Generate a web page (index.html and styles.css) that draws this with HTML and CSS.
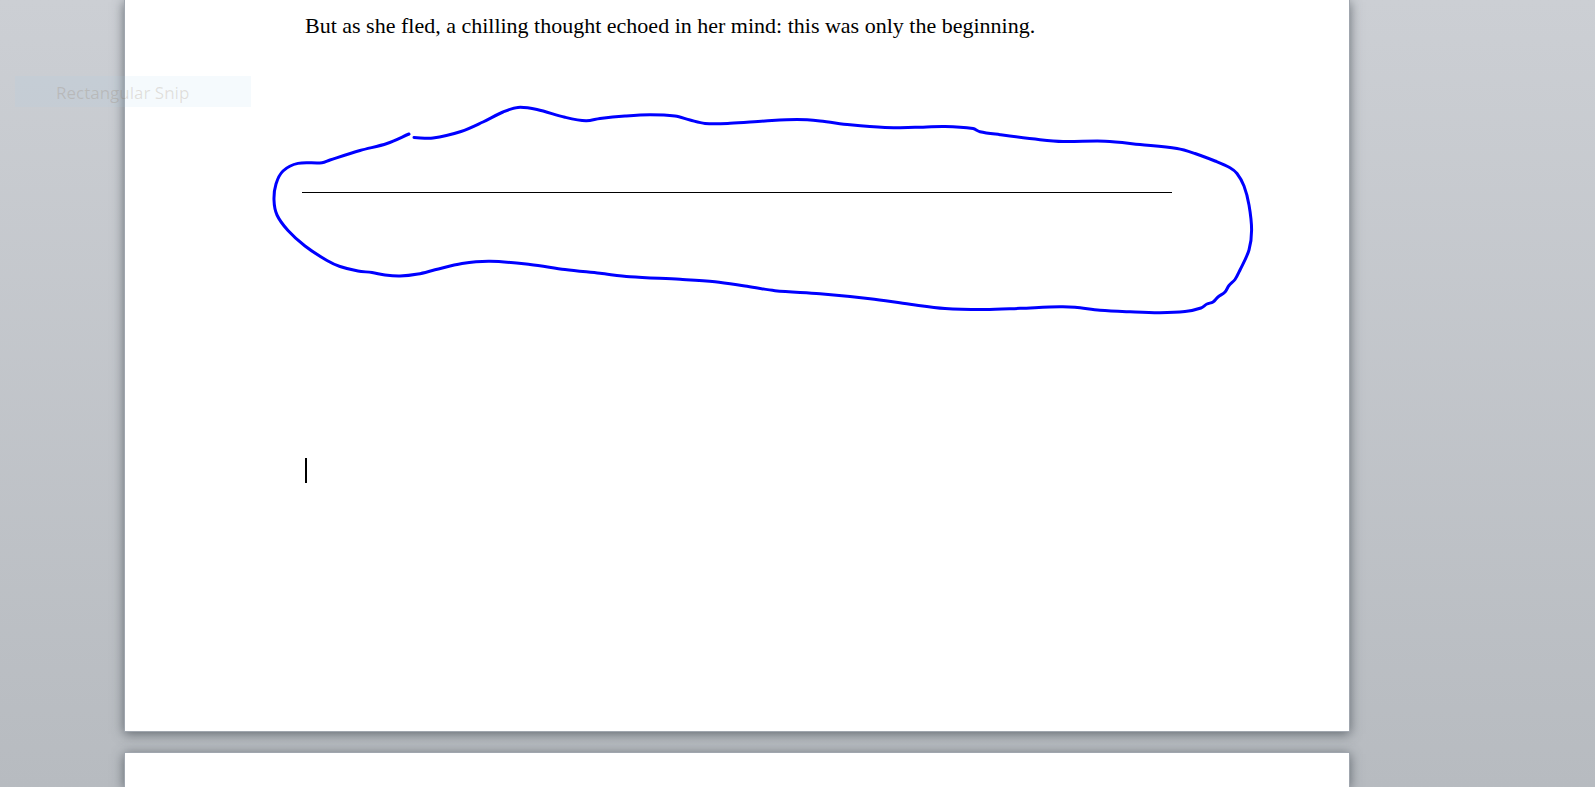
FILE: index.html
```
<!DOCTYPE html>
<html lang="en">
<head>
  <meta charset="UTF-8">
  <title>Document</title>
  <link rel="stylesheet" href="styles.css">
</head>
<body>

<main class="workspace">

  <section class="sheet sheet-first">
    <p class="line">But as she fled, a chilling thought echoed in her mind: this was only the beginning.</p>
    <hr class="rule">
    <div class="caret"></div>

    <!-- pen stroke around the horizontal line -->
    <svg class="ink" width="1000" height="220" viewBox="260 100 1000 220" aria-hidden="true">
      <path id="stroke"/>
    </svg>
  </section>

  <section class="sheet sheet-next"></section>

</main>

<div class="snip-label">Rectangular Snip</div>

  <script>
    const points = [
      [414, 137.5], [433, 138], [461, 131.5], [483, 122], [503, 112], [518, 107.4], [537, 109.5],
      [565, 117.3], [586, 120.8], [600, 118.5], [625, 116], [650, 114.7], [675, 116], [690, 120],
      [705, 123.4], [730, 123.3], [765, 121], [797, 119.6], [820, 121], [850, 124.8], [885, 127.5],
      [915, 127.3], [945, 126.5], [973, 128.6], [980, 131.7], [1000, 134.7], [1040, 139.7],
      [1063, 141.5], [1105, 141.2], [1140, 144.5], [1177, 148.5], [1195, 153.5], [1215, 161],
      [1230, 167.7], [1237, 173.5], [1244, 186], [1249, 205], [1251.6, 230], [1249, 250],
      [1240, 270], [1235, 279.5], [1229, 285.5], [1225, 292], [1218, 297], [1213, 302],
      [1207, 304], [1201, 308], [1185, 311.5], [1160, 312.7], [1130, 311.8], [1100, 310.2],
      [1075, 307.2], [1060, 306.7], [1020, 308.3], [985, 309.5], [945, 308.5], [910, 304.3],
      [870, 298.7], [820, 293.7], [775, 290.7], [745, 286], [715, 281.7], [680, 279.3],
      [630, 276.8], [600, 273.3], [565, 269.5], [530, 264.5], [490, 261.2], [462, 263.5],
      [435, 269.8], [418, 274], [400, 276], [385, 275], [372, 272.5], [358, 271], [340, 266.5],
      [327, 260.5], [305, 246], [288, 230.5], [277, 215], [274, 200], [276, 184], [283, 171],
      [298, 163.4], [322, 162.8], [330, 160], [360, 150.5], [387, 143.5], [409, 134]
    ];
    const dist = (a, b) => Math.hypot(b[0] - a[0], b[1] - a[1]);

    function smoothPath(p) {
      const tangents = p.map((q, i) => {
        const a = p[Math.max(i - 1, 0)];
        const b = p[Math.min(i + 1, p.length - 1)];
        const d = dist(a, q) + dist(q, b);
        return [(b[0] - a[0]) / d, (b[1] - a[1]) / d];
      });
      let d = "M" + p[0];
      for (let i = 1; i < p.length; i++) {
        const h = dist(p[i - 1], p[i]) / 3;
        const s = tangents[i - 1];
        const e = tangents[i];
        d += " C" + [p[i - 1][0] + s[0] * h, p[i - 1][1] + s[1] * h,
                     p[i][0] - e[0] * h, p[i][1] - e[1] * h, p[i][0], p[i][1]];
      }
      return d;
    }

    document.getElementById("stroke").setAttribute("d", smoothPath(points));
  </script>

</body>
</html>
```

FILE: styles.css
```
body {
  margin: 0;
  height: 100vh;
  overflow: hidden;
  background: linear-gradient(#cccfd4, #b7bbc0);
  font-family: "Liberation Serif", "Times New Roman", serif;
  color: #000;
}
.workspace {
  display: flex;
  flex-direction: column;
  gap: 20px;
  height: 100%;
  padding: 0 245px 0 124px;
}
.sheet {
  position: relative;
  padding: 12px 179px;
  border: 1px solid #a0a6ae;
  background-color: #fff;
  box-shadow: 0 2px 11px rgba(60, 68, 76, 0.7);
}
.sheet-first {
  padding-bottom: 248px;
  border-top: none;
}
.sheet-next {
  flex: 1 0 auto;
  border-bottom: none;
}
.line {
  margin: 0 0 0 1px;
  font-size: 22px;
  line-height: 28px;
}
.rule {
  height: 1px;
  margin: 152px -2px 0;
  border: none;
  background-color: #000;
}
.caret {
  width: 2px;
  height: 25px;
  margin: 265px 0 0 1px;
  background-color: #000;
}
.ink {
  position: absolute;
  top: 100px;
  left: 135px;
  fill: none;
  stroke: #00f;
  stroke-width: 3;
  stroke-linecap: round;
  stroke-linejoin: round;
}

/* fading menu entry over the page edge */
.snip-label {
  position: absolute;
  top: 76px;
  left: 15px;
  box-sizing: border-box;
  width: 236px;
  height: 31px;
  padding-left: 41px;
  background-color: rgba(160, 210, 240, 0.11);
  color: rgba(130, 100, 70, 0.19);
  font-family: "Open Sans", "Noto Sans", sans-serif;
  font-size: 17px;
  line-height: 33px;
}
```
